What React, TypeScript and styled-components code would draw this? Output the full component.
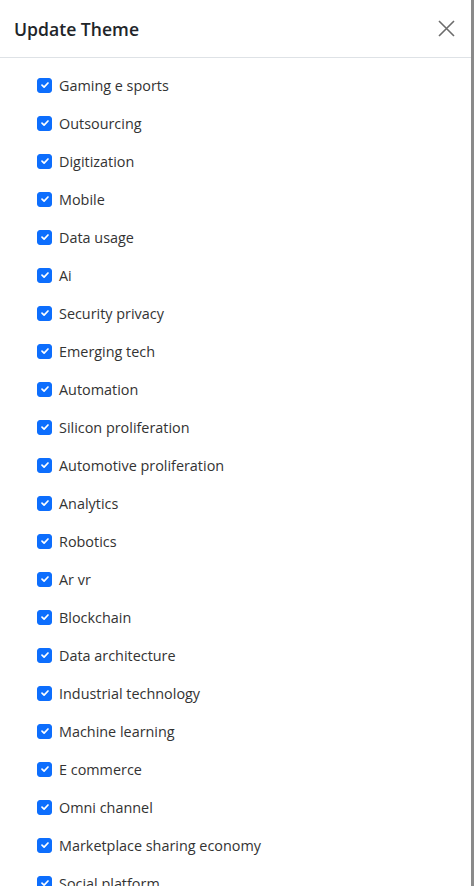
import styled, { createGlobalStyle } from "styled-components";

const GlobalStyle = createGlobalStyle`
  html, body {
    margin: 0;
    padding: 0;
    background: #8c8c8c;
    overflow: hidden;
  }
`;

const StyledPage = styled.div`
  display: flex;
  flex-direction: row;
  width: 474px;
  height: 886px;
  overflow: hidden;
`;

const StyledDrawer = styled.div`
  display: flex;
  flex-direction: column;
  width: 471px;
  height: 100%;
  background-color: #ffffff;
  font-family: "Open Sans", "Noto Sans", sans-serif;
  color: #212529;
  overflow: hidden;
`;

const StyledScrollEdge = styled.div`
  flex: 1;
  background-color: #8a8a8a;
`;

const StyledHeader = styled.div`
  display: flex;
  flex-direction: row;
  align-items: center;
  justify-content: space-between;
  height: 58px;
  padding: 0 16px 0 14px;
  border-bottom: 1px solid #dee2e6;
  box-sizing: border-box;
  flex-shrink: 0;
`;

const StyledTitle = styled.h5`
  margin: 0;
  font-size: 17.6px;
  font-weight: 600;
  color: #212529;
`;

const StyledCloseButton = styled.button`
  border: none;
  background: none;
  padding: 0;
  width: 18px;
  height: 18px;
  display: flex;
  align-items: center;
  justify-content: center;
  cursor: pointer;
`;

const StyledList = styled.div`
  display: flex;
  flex-direction: column;
  padding: 8px 0 0 37px;
`;

const StyledItem = styled.label`
  display: flex;
  flex-direction: row;
  align-items: center;
  gap: 7px;
  height: 38px;
  flex-shrink: 0;
  font-size: 14.4px;
  color: #333;
`;

const StyledBox = styled.span<{ $checked: boolean }>`
  display: flex;
  align-items: center;
  justify-content: center;
  width: 15px;
  height: 15px;
  border-radius: 3px;
  background-color: ${(p) => (p.$checked ? "#0d6efd" : "#fff")};
  border: 1px solid ${(p) => (p.$checked ? "#0d6efd" : "#adb5bd")};
  box-sizing: border-box;
`;

const themes = [
  "Gaming e sports",
  "Outsourcing",
  "Digitization",
  "Mobile",
  "Data usage",
  "Ai",
  "Security privacy",
  "Emerging tech",
  "Automation",
  "Silicon proliferation",
  "Automotive proliferation",
  "Analytics",
  "Robotics",
  "Ar vr",
  "Blockchain",
  "Data architecture",
  "Industrial technology",
  "Machine learning",
  "E commerce",
  "Omni channel",
  "Marketplace sharing economy",
  "Social platform",
];

const App = () => {
  return (
    <StyledPage>
      <GlobalStyle />
      <StyledDrawer>
        <StyledHeader>
          <StyledTitle>Update Theme</StyledTitle>
          <StyledCloseButton aria-label="Close">
            <svg width="17" height="17" viewBox="0 0 17 17">
              <path d="M1 1 L16 16 M16 1 L1 16" stroke="#6c6c6c" strokeWidth="1.6" />
            </svg>
          </StyledCloseButton>
        </StyledHeader>
        <StyledList>
          {themes.map((t) => (
            <StyledItem key={t}>
              <StyledBox $checked={true}>
                <svg width="10" height="10" viewBox="0 0 10 10">
                  <path
                    d="M2 5.2 L4.1 7.2 L8 3"
                    stroke="#fff"
                    strokeWidth="1.7"
                    fill="none"
                    strokeLinecap="round"
                    strokeLinejoin="round"
                  />
                </svg>
              </StyledBox>
              {t}
            </StyledItem>
          ))}
        </StyledList>
      </StyledDrawer>
      <StyledScrollEdge />
    </StyledPage>
  );
};

export default App;
